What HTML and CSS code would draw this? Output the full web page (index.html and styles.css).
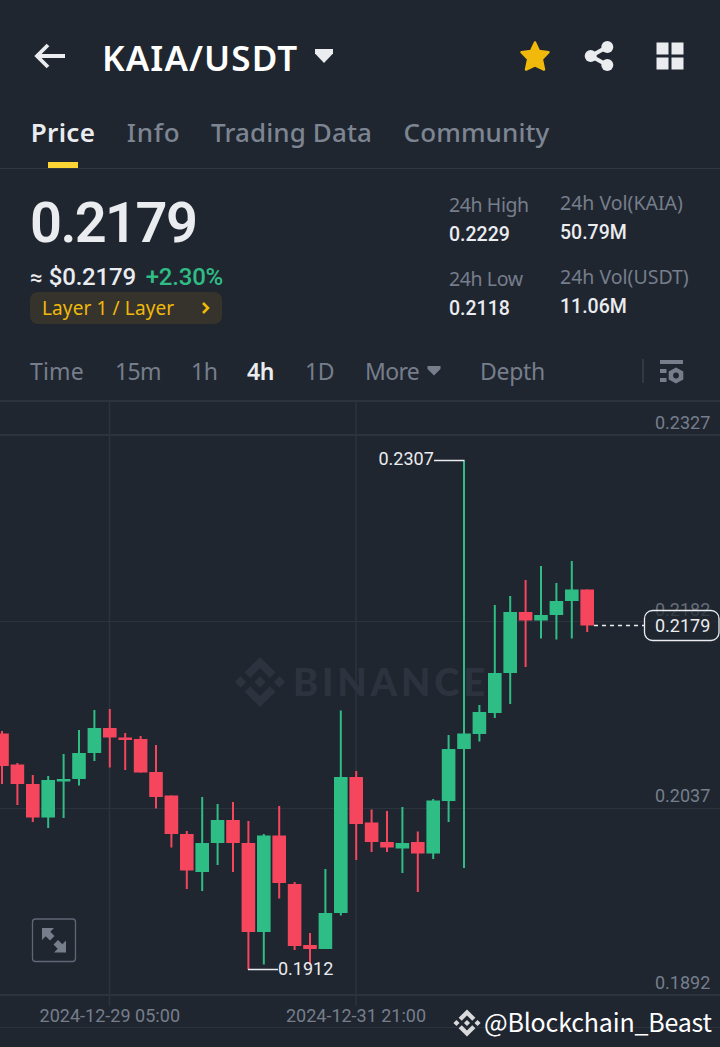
FILE: index.html
```html
<!DOCTYPE html>
<html lang="en">
<head>
    <meta charset="UTF-8">
    <meta name="viewport" content="width=device-width, initial-scale=1.0">
    <title>KAIA/USDT</title>
    <link rel="stylesheet" href="styles.css">
</head>
<body>
    <header class="top-bar">
        <svg class="back" width="32" height="26" viewBox="0 0 32 26">
            <path d="M31 13H4M14 2L3 13L14 24" fill="none" stroke="#eaecef" stroke-width="3.8"/>
        </svg>
        <h1>KAIA/USDT</h1>
        <svg class="caret" width="20" height="16" viewBox="0 0 20 16">
            <path d="M1 1H19V5.500L10 15L1 5.500Z" fill="#eaecef"/>
        </svg>
        <div class="actions">
            <svg width="32" height="32" viewBox="0 0 32 32">
                <path d="M16 2.500L20 11L29.500 12.200L22.800 19L25 29.500L16 25.300L7 29.500L9.200 19L2.500 12.200L12 11Z" fill="#f0b90b" stroke="#f0b90b" stroke-width="2.500" stroke-linejoin="round"/>
            </svg>
            <svg width="30" height="32" viewBox="0 0 30 32">
                <path d="M23 7L7 16L23 25" fill="none" stroke="#eaecef" stroke-width="4"/>
                <circle cx="23.300" cy="7" r="6" fill="#eaecef"/>
                <circle cx="6.700" cy="16" r="6" fill="#eaecef"/>
                <circle cx="23.300" cy="25" r="6" fill="#eaecef"/>
            </svg>
            <svg width="28" height="28" viewBox="0 0 28 28">
                <path d="M.5.500h12v12h-12zM15.500.500h12v12h-12zM.5 15.500h12v12h-12zM15.500 15.500h12v12h-12z" fill="#eaecef"/>
            </svg>
        </div>
    </header>

    <nav class="tabs">
        <a class="tab active">Price</a>
        <a class="tab info">Info</a>
        <a class="tab trading">Trading Data</a>
        <a class="tab community">Community</a>
    </nav>

    <section class="summary">
        <div class="quote">
            <div class="price">0.2179</div>
            <div class="fiat"><span class="approx">≈</span> $0.2179 <span class="change">+2.30%</span></div>
            <div class="tag">
                <span>Layer 1 / Layer</span>
                <svg width="10" height="14" viewBox="0 0 10 14">
                    <path d="M2 2L7 7L2 12" fill="none" stroke="#f0b90b" stroke-width="2.600"/>
                </svg>
            </div>
        </div>
        <div class="stats">
            <div class="stat high"><label>24h High</label><b>0.2229</b></div>
            <div class="stat low"><label>24h Low</label><b>0.2118</b></div>
        </div>
        <div class="stats volume">
            <div class="stat vol-kaia"><label>24h Vol(KAIA)</label><b>50.79M</b></div>
            <div class="stat vol-usdt"><label>24h Vol(USDT)</label><b>11.06M</b></div>
        </div>
    </section>

    <nav class="intervals">
        <a class="time">Time</a>
        <a class="m15">15m</a>
        <a class="h1">1h</a>
        <a class="h4 active">4h</a>
        <a class="d1">1D</a>
        <a class="more">More</a>
        <svg class="more-caret" width="14" height="12" viewBox="0 0 14 12">
            <path d="M.5 1H13.500V4L7 10.500L.5 4Z" fill="#767e8c"/>
        </svg>
        <a class="depth">Depth</a>
        <svg class="settings" width="42" height="28" viewBox="0 0 42 28">
            <path d="M1 2V26" stroke="#323944" stroke-width="2"/>
            <path d="M18 3H41V7H18zM18 12H24.500V16H18zM18 21H24.500V25H18z" fill="#767e8c"/>
            <path fill-rule="evenodd" d="M34 10.500L41.300 14.500V22.500L34 26.500L26.700 22.500V14.500ZM34 15.600A2.900 2.900 0 1 0 34 21.400A2.900 2.900 0 1 0 34 15.600Z" fill="#767e8c"/>
        </svg>
    </nav>

    <main class="chart">
        <svg width="720" height="647" viewBox="0 400 720 647">
            <defs>
                <g id="logo">
                    <path d="M0-25L15.500-9.800L9.700-4.200L0-14L-9.700-4.200L-15.500-9.800ZM0 25L15.500 9.800L9.700 4.200L0 14L-9.700 4.200L-15.500 9.800ZM0-5.700L5.700 0L0 5.700L-5.700 0ZM-19.500-5.700L-13.800 0L-19.500 5.700L-25.200 0ZM19.500-5.700L25.200 0L19.500 5.700L13.800 0Z"/>
                </g>
            </defs>
            <g class="grid">
                <path d="M0 401H720M0 435H720M0 995H720" stroke-width="2"/>
                <path d="M0 621.500H720M0 808.500H720M0 1027.500H720" stroke-width="1"/>
                <path d="M109.500 402V1006M356 402V1006" stroke-width="1.500"/>
            </g>
            <g class="watermark">
                <use href="#logo" x="260" y="682"/>
                <text x="293" y="695.500" textLength="192">BINANCE</text>
            </g>
            <g class="axis">
                <text x="655" y="429">0.2327</text>
                <text x="655" y="616" class="faded">0.2182</text>
                <text x="655" y="802">0.2037</text>
                <text x="655" y="989">0.1892</text>
                <text x="39.500" y="1022" textLength="140.500">2024-12-29 05:00</text>
                <text x="286" y="1022" textLength="140">2024-12-31 21:00</text>
            </g>
            <g id="candles"></g>
            <g class="marker">
                <path d="M434 460.500H464.500M248 969.500H278"/>
                <path d="M594 625.500H645" stroke-dasharray="4 4"/>
                <rect x="644.500" y="610.500" width="74.500" height="30" rx="8"/>
                <text x="378.500" y="465">0.2307</text>
                <text x="278" y="975">0.1912</text>
                <text x="655" y="632">0.2179</text>
            </g>
            <g class="fullscreen">
                <rect x="32.500" y="919" width="43" height="42.500" rx="3"/>
                <path d="M42 928H54L50.300 931.700L54.500 936L50 940.500L45.700 936.200L42 940ZM66 952.500H54L57.700 948.800L53.500 944.500L58 940L62.300 944.300L66 940.500Z"/>
            </g>
            <g class="author">
                <use href="#logo" transform="translate(467 1023) scale(.54)"/>
                <text x="484" y="1032" textLength="228">@Blockchain_Beast</text>
            </g>
        </svg>
    </main>

    <script>
        // high, body top, body bottom, low, direction
        const candles = [
            [731, 733.5, 766, 784, "down"],
            [763, 764.5, 784, 805, "down"],
            [775, 784, 817.5, 822, "down"],
            [776, 780, 817.5, 828, "up"],
            [754, 779, 781.5, 818, "up"],
            [730, 753, 779, 785.5, "up"],
            [710, 728, 753, 761, "up"],
            [709, 728, 737.5, 767.5, "down"],
            [733, 737.5, 740, 770, "down"],
            [736, 739, 772.5, 772.5, "down"],
            [745, 772, 797, 808.5, "down"],
            [795.5, 795.5, 834, 847.5, "down"],
            [831, 834, 870.5, 889, "down"],
            [797, 843, 872, 891, "up"],
            [804, 820, 843, 865, "up"],
            [802, 820, 843, 872, "down"],
            [821, 843, 932, 969.5, "down"],
            [834, 835.5, 932, 964.5, "up"],
            [806, 835.5, 883, 898.5, "down"],
            [882, 884, 946, 950, "down"],
            [933, 945, 949, 965, "down"],
            [869, 913, 949, 949, "up"],
            [710.5, 777, 913, 915.5, "up"],
            [771, 777, 824, 860, "down"],
            [809.5, 822.5, 842, 852, "down"],
            [811, 842, 847.5, 852, "down"],
            [807, 843, 848.5, 873, "up"],
            [831.5, 842, 853.5, 892, "down"],
            [799, 800.5, 853.5, 859, "up"],
            [735, 749, 801, 822, "up"],
            [460.5, 733.5, 749, 868, "up"],
            [705, 712, 734, 741.5, "up"],
            [605, 673, 713, 718, "up"],
            [596, 612, 673, 704, "up"],
            [580, 612, 620.5, 667, "down"],
            [566, 615, 620.5, 638.5, "up"],
            [583, 601, 615, 639.5, "up"],
            [561, 589.5, 601, 638.5, "up"],
            [589.5, 589.5, 625.5, 632, "down"]
        ];

        function drawCandles() {
            let html = "";
            candles.forEach(([high, top, bottom, low, dir], index) => {
                let x = 2 + index * 15.4;
                html += `<rect class="${dir}" x="${x - 1}" y="${high}" width="2" height="${low - high}"/>`;
                html += `<rect class="${dir}" x="${x - 6.8}" y="${top}" width="13.6" height="${bottom - top}"/>`;
            });
            document.getElementById("candles").innerHTML = html;
        }
        drawCandles();
    </script>
</body>
</html>
```
FILE: styles.css
```css
* {
    box-sizing: border-box;
}
body {
    margin: 0;
    width: 720px;
    height: 1047px;
    overflow: hidden;
    background: #202630;
    color: #eaecef;
    font-family: "Noto Sans", sans-serif;
}
svg {
    display: block;
    flex: none;
}
.top-bar {
    display: flex;
    align-items: center;
    height: 112px;
    padding: 0 36px 0 34px;
}
.top-bar h1 {
    margin: 2px 0 0 36px;
    width: 197px;
    font-size: 35px;
    font-weight: 600;
    letter-spacing: 1.1px;
    color: #fff;
    white-space: nowrap;
}
.caret {
    margin-left: 15px;
}
.actions {
    display: flex;
    align-items: center;
    margin-left: auto;
}
.actions svg:nth-child(2) {
    margin: 0 42px 0 33px;
}
.tabs {
    display: flex;
    height: 57px;
    padding-left: 30px;
    border-bottom: 1px solid #323842;
    font-size: 26px;
    font-weight: 500;
    line-height: 40px;
    color: #7d8592;
}
.tab {
    display: flex;
    flex-direction: column;
    align-items: center;
    justify-content: space-between;
    white-space: nowrap;
}
.tab.active {
    width: 66px;
    margin-right: 31px;
    color: #eaecef;
    font-weight: 600;
    letter-spacing: 0.3px;
}
.tab.active::after {
    content: "";
    width: 30px;
    height: 6px;
    background: #fcd535;
}
.info {
    width: 53px;
    margin-right: 31px;
    letter-spacing: 0.7px;
}
.trading {
    width: 161px;
    margin-right: 31px;
    letter-spacing: 0.1px;
}
.community {
    width: 147px;
    letter-spacing: 0.1px;
}
.summary {
    display: flex;
    height: 173px;
    padding-left: 30px;
}
.quote {
    width: 419px;
    padding-top: 24px;
    font-family: Roboto, sans-serif;
}
.price {
    height: 70px;
    font-size: 56px;
    font-weight: 600;
    line-height: 61px;
    letter-spacing: -1.6px;
}
.fiat {
    height: 29px;
    font-size: 24px;
    font-weight: 500;
    line-height: 29px;
    letter-spacing: -0.2px;
    white-space: nowrap;
}
.approx {
    display: inline-block;
    width: 13px;
    font-size: 22px;
}
.change {
    margin-left: 4px;
    color: #2ebd85;
}
.tag {
    display: flex;
    align-items: center;
    justify-content: space-between;
    width: 192px;
    height: 32px;
    padding: 0 11px 0 12px;
    border-radius: 8px;
    background: #35332b;
    color: #f0b90b;
    font-family: "Noto Sans", sans-serif;
    font-size: 19px;
    letter-spacing: 0.12px;
}
.stats {
    width: 111px;
    padding-top: 21px;
}
.stats.volume {
    padding-top: 19px;
}
.stat {
    height: 74px;
    white-space: nowrap;
}
.stat label {
    display: block;
    font-size: 19.5px;
    line-height: 29px;
    color: #767e8c;
}
.high label,
.low label {
    letter-spacing: -0.4px;
}
.stat b {
    display: block;
    font-family: Roboto, sans-serif;
    font-size: 19.5px;
    font-weight: 500;
    line-height: 31px;
}
.intervals {
    display: flex;
    align-items: center;
    height: 58px;
    padding-left: 30px;
    font-size: 23px;
    line-height: 58px;
    letter-spacing: -0.3px;
    color: #767e8c;
    white-space: nowrap;
}
.intervals .active {
    color: #eaecef;
    font-weight: 600;
}
.time {
    width: 85px;
    letter-spacing: 0.2px;
}
.m15 {
    width: 76px;
    letter-spacing: -0.6px;
}
.h1 {
    width: 56px;
}
.h4 {
    width: 58px;
}
.d1 {
    width: 60px;
}
.more {
    width: 62px;
    letter-spacing: -0.7px;
}
.more-caret {
    margin-right: 39px;
}
.depth {
    width: 162px;
}
.chart {
    height: 647px;
}
.grid path {
    fill: none;
    stroke: #2d333d;
}
.watermark {
    fill: #2d333e;
    font-family: Lato, sans-serif;
    font-size: 38px;
    font-weight: 900;
}
.axis {
    fill: #767e8c;
    font-family: Roboto, sans-serif;
    font-size: 18px;
}
.faded {
    opacity: 0.8;
}
.up {
    fill: #2ebd85;
}
.down {
    fill: #f6465d;
}
.marker {
    font-family: Roboto, sans-serif;
    font-size: 18px;
    fill: #eaecef;
}
.marker path {
    stroke: #eaecef;
    stroke-width: 1.3;
}
.marker rect {
    fill: #202630;
    fill-opacity: 0.7;
    stroke: #eaecef;
    stroke-width: 1.3;
}
.fullscreen rect {
    fill: none;
    stroke: #5f6775;
    stroke-width: 1.3;
}
.fullscreen path {
    fill: #767e8c;
}
.author {
    fill: #fff;
    font-family: "Noto Sans CJK SC", sans-serif;
    font-size: 25px;
    font-weight: 400;
}
.author use {
    fill: #d8d9db;
}
```
